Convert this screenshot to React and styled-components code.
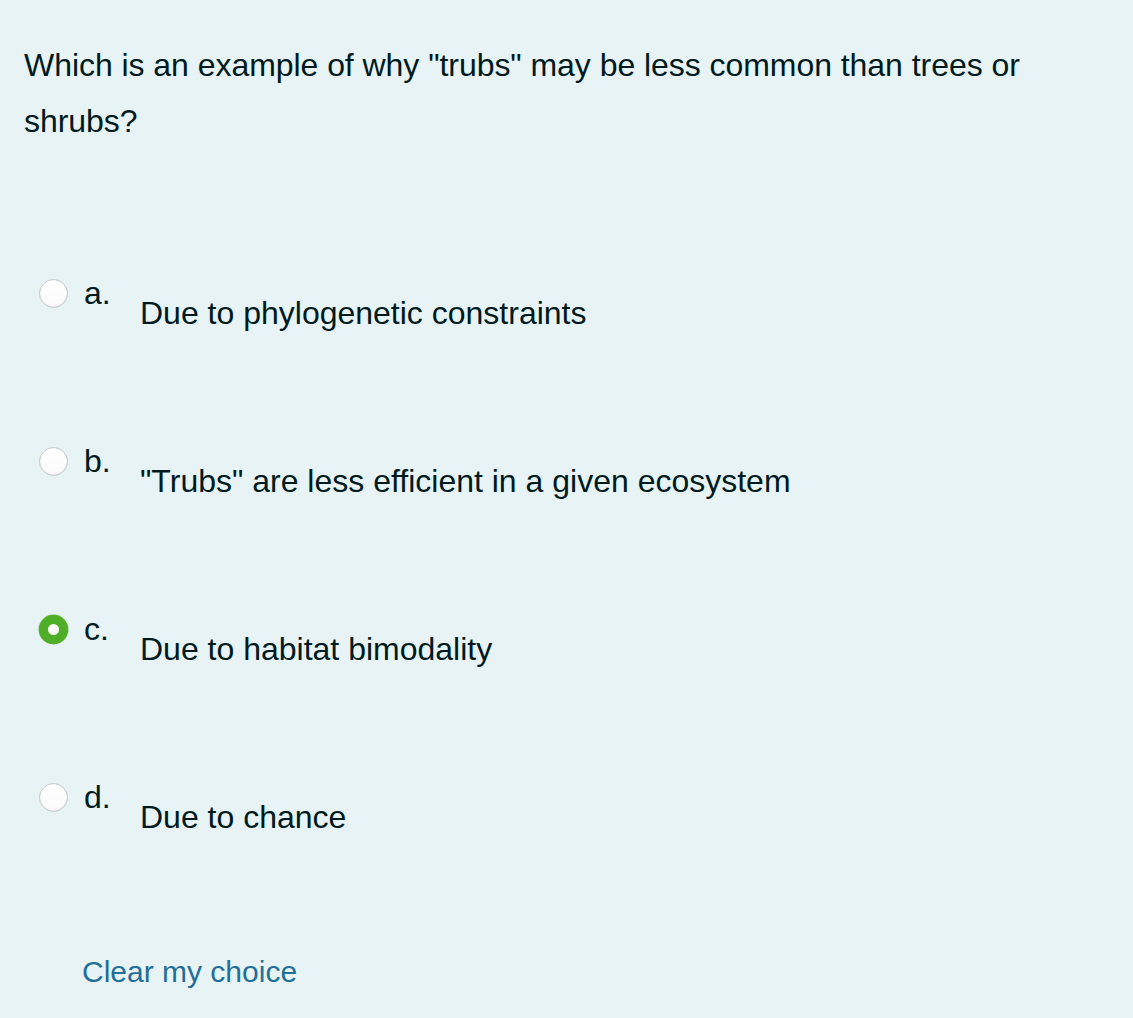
import React, { useState } from 'react';
import styled, { createGlobalStyle } from 'styled-components';

const options = [
  { key: 'a', text: 'Due to phylogenetic constraints' },
  { key: 'b', text: '"Trubs" are less efficient in a given ecosystem' },
  { key: 'c', text: 'Due to habitat bimodality' },
  { key: 'd', text: 'Due to chance' },
];

const App = () => {
  const [choice, setChoice] = useState('c');

  return (
    <>
      <GlobalStyle />
      <Page>
        <Question>
          Which is an example of why "trubs" may be less common than trees or shrubs?
        </Question>
        <Answers>
          {options.map((opt) => (
            <Option key={opt.key} onClick={() => setChoice(opt.key)}>
              <Radio
                type="radio"
                name="answer"
                checked={choice === opt.key}
                onChange={() => setChoice(opt.key)}
              />
              <Letter>{opt.key}.</Letter>
              <OptionText>{opt.text}</OptionText>
            </Option>
          ))}
        </Answers>
        <ClearLink href="#" onClick={(e) => { e.preventDefault(); setChoice(null); }}>
          Clear my choice
        </ClearLink>
      </Page>
    </>
  );
};

export default App;

const GlobalStyle = createGlobalStyle`
  html, body {
    margin: 0;
    padding: 0;
    background: #e7f3f5;
  }
  body {
    font-family: "Liberation Sans", Arial, Helvetica, sans-serif;
    color: #001a1e;
  }
`;

const Page = styled.div`
  min-height: 1018px;
  box-sizing: border-box;
  padding: 37px 0 0 24px;
  background: #e7f3f5;
`;

const Question = styled.div`
  font-size: 32px;
  line-height: 56px;
  letter-spacing: -0.05px;
  max-width: 1010px;
`;

const Answers = styled.div`
  display: flex;
  flex-direction: column;
  gap: 110px;
  margin-top: 125px;
  padding-left: 15px;
`;

const Option = styled.label`
  display: flex;
  align-items: flex-start;
  cursor: pointer;
  font-size: 32px;
  line-height: 38px;
`;

const Radio = styled.input`
  appearance: none;
  -webkit-appearance: none;
  box-sizing: border-box;
  width: 29px;
  height: 29px;
  margin: 5px 16px 0 0;
  border-radius: 50%;
  background: linear-gradient(#ffffff, #fbfbfb);
  border: 1px solid #c2c6c8;
  box-shadow: inset 0 -1px 2px rgba(0, 0, 0, 0.06);
  flex-shrink: 0;

  &:checked {
    border: 9px solid #4fae27;
    box-shadow: 0 0 0 0.5px #72c24d;
    background: #fff;
  }
`;

const Letter = styled.span`
  width: 56px;
  flex-shrink: 0;
`;

const OptionText = styled.span`
  margin-top: 20px;
`;

const ClearLink = styled.a`
  display: inline-block;
  margin: 117px 0 0 58px;
  font-size: 30px;
  line-height: 38px;
  color: #1f6f99;
  text-decoration: none;
`;
